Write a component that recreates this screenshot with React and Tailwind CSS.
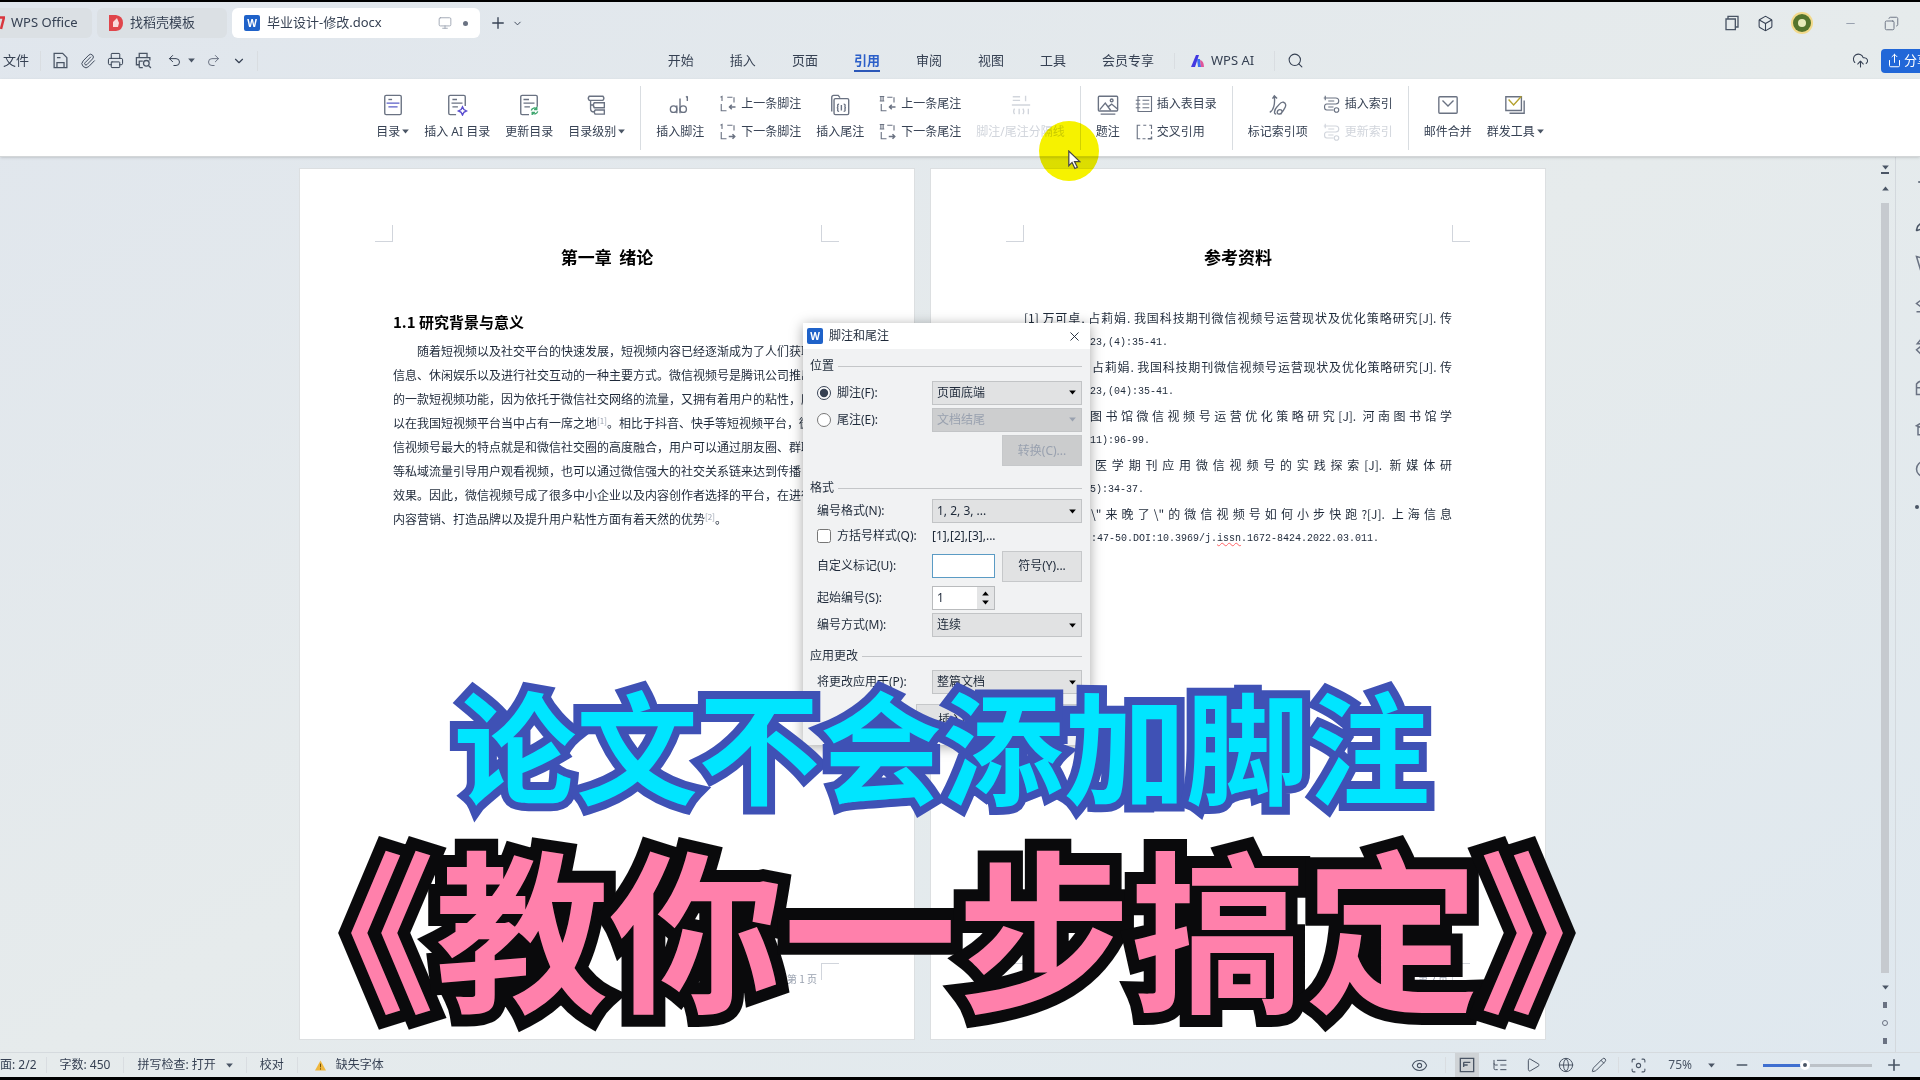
import {
  Box, ChevronDown, CloudUpload, Eye, Focus, Globe, ListTree, Minus, Monitor, Paperclip,
  Pencil, Play, Plus, Printer, Redo2, Search, Share, Undo2, X, Copy,
} from 'lucide-react';

const TABS = ['开始', '插入', '页面', '引用', '审阅', '视图', '工具', '会员专享'];

const BODY = [
  '信息、休闲娱乐以及进行社交互动的一种主要方式。微信视频号是腾讯公司推出',
  '的一款短视频功能，因为依托于微信社交网络的流量，又拥有着用户的粘性，所',
  <>以在我国短视频平台当中占有一席之地<Cite n={1} />。相比于抖音、快手等短视频平台，微</>,
  '信视频号最大的特点就是和微信社交圈的高度融合，用户可以通过朋友圈、群聊',
  '等私域流量引导用户观看视频，也可以通过微信强大的社交关系链来达到传播',
  '效果。因此，微信视频号成了很多中小企业以及内容创作者选择的平台，在进行',
  <>内容营销、打造品牌以及提升用户粘性方面有着天然的优势<Cite n={2} />。</>,
];

const REFERENCES = [
  { pad: 'pl-0', text: '[1] 万可卓, 占莉娟. 我国科技期刊微信视频号运营现状及优化策略研究[J]. 传', tailPad: 'pl-[60px]', tail: '023,(4):35-41.' },
  { pad: 'pl-[68px]', text: '占莉娟. 我国科技期刊微信视频号运营现状及优化策略研究[J]. 传', tailPad: 'pl-[60px]', tail: '023,(04):35-41.' },
  { pad: 'pl-[66px]', text: '图书馆微信视频号运营优化策略研究[J]. 河南图书馆学', tailPad: 'pl-[60px]', tail: '(11):96-99.' },
  { pad: 'pl-[71px]', text: '医学期刊应用微信视频号的实践探索[J]. 新媒体研', tailPad: 'pl-[66px]', tail: '5):34-37.' },
  { pad: 'pl-[67px]', text: '\\"来晚了\\"的微信视频号如何小步快跑?[J]. 上海信息', tailPad: 'pl-[67px]', tail: null },
];

function Cite({ n }) {
  return <sup className="text-[8px] leading-none text-gray-400">[{n}]</sup>;
}

function Caret({ className = 'text-gray-600' }) {
  return (
    <svg viewBox="0 0 8 6" className={`h-[5px] w-[7px] shrink-0 ${className}`} fill="currentColor">
      <path d="M0 0.5h8L4 5.5z" />
    </svg>
  );
}

function Divider({ className = 'h-5' }) {
  return <span className={`w-px shrink-0 bg-[#d9dde1] ${className}`} />;
}

/* ---------- ribbon icons ---------- */

function Icon({ children, size = 'h-[22px] w-[22px]', className = 'text-gray-500' }) {
  return (
    <svg viewBox="0 0 24 24" className={`${size} shrink-0 ${className}`} fill="none" stroke="currentColor" strokeWidth="1.5">
      {children}
    </svg>
  );
}

const TocIcon = () => (
  <Icon>
    <rect x="3" y="1.5" width="18" height="21" rx="1.5" />
    <path d="M7 6h4" />
    <path d="M5 10h14M7 14h10" stroke="#5b5fc7" />
  </Icon>
);

const AiTocIcon = () => (
  <Icon>
    <path d="M11 22.500H4.500A1.500 1.500 0 0 1 3 21V3a1.500 1.500 0 0 1 1.500-1.500h15A1.500 1.500 0 0 1 21 3v10M7 6h5M6 10h12M7 14h6" />
    <path d="M18 14l1.500 3 3 1.500-3 1.500-1.500 3-1.500-3-3-1.500 3-1.500z" stroke="#5b4fd0" />
  </Icon>
);

const RefreshTocIcon = () => (
  <Icon>
    <path d="M12 22.500H4.500A1.500 1.500 0 0 1 3 21V3a1.500 1.500 0 0 1 1.500-1.500h15A1.500 1.500 0 0 1 21 3v11M6 6h6M6 10h12M7 14h6" />
    <path d="M14.500 18a3.500 3.500 0 0 1 6-1.500M21.500 19a3.500 3.500 0 0 1-6 1.500M20.500 14v3h-3M15.500 23v-3h3" stroke="#3fa66f" />
  </Icon>
);

const LevelIcon = () => (
  <Icon>
    <path d="M3.500 2.500h15q2 2.200 0 4.500h-15q-2-2.300 0-4.500zM9 9.500h11V15H9q-2-2.700 0-5.500zM10 17.500h10V22H10q-2-2.200 0-4.500zM5 7v9q0 3.500 4 3.500M5 12h3" />
  </Icon>
);

const FootnoteIcon = () => (
  <Icon>
    <circle cx="5" cy="16.500" r="3.500" />
    <path d="M8.500 12.500V21M12 5v16M20 2.500v5M18.500 3.500L20 2.500" />
    <circle cx="15.500" cy="16.500" r="3.500" />
  </Icon>
);

const EndnoteIcon = () => (
  <Icon>
    <path d="M3 19V3.500A2 2 0 0 1 5 1.500h5l2 2.500" />
    <rect x="5.500" y="5" width="16" height="17.500" rx="1.500" />
    <path d="M11 11q-2 0-1.500 2t-1 2q1.500 0 1 2t1.500 2M16 11q2 0 1.500 2t1 2q-1.500 0-1 2t-1.500 2M13.500 12v6" />
  </Icon>
);

const StepIcon = ({ next, roman }) => (
  <Icon size="h-[18px] w-[18px]">
    <path d={roman ? 'M1 2h6M2.500 2v6M5.500 2v6M1 8h6' : 'M2 3l2-1v6'} />
    <path d="M3 12v9h7" />
    <path d="M11 3h9v8" strokeDasharray="7 2" />
    {next ? <path d="M13 18h8M18 15l3 3-3 3" strokeWidth="2" /> : <path d="M22 16h-8M17 13l-3 3 3 3" strokeWidth="2" />}
  </Icon>
);

const SeparatorIcon = () => (
  <Icon className="text-gray-300">
    <path d="M3 3h8M3 7h8M17 2v6M2 12h20M5 16q-2 3 0 6M10 16v6M14 16q2 3 0 6M20 16v6" />
  </Icon>
);

const CaptionIcon = () => (
  <Icon>
    <rect x="1.500" y="2.500" width="21" height="16" rx="1" />
    <path d="M3 17l6-7 6 8M12 14l4-3 6 5M4 22h16" />
    <circle cx="16" cy="7" r="1.500" />
  </Icon>
);

const TableListIcon = () => (
  <Icon size="h-[18px] w-[18px]">
    <path d="M4 2h18v20H4zM1 7h6M1 12h6M1 17h6M10 7h9M10 12h9M10 17h9" />
  </Icon>
);

const CrossRefIcon = () => (
  <Icon size="h-[18px] w-[18px]">
    <path d="M7 3H3v18h4M11 3h4M19 3h3v5M22 11v4M10 21h4" />
    <path d="M17 21h5v-3" strokeWidth="2" />
  </Icon>
);

const MarkIcon = () => (
  <Icon>
    <path d="M3 20c4-2 6-9 5-17M6 5l2-3 3 3M10 22c-3 0-2-5 1-8s4-6 7-5 3 4 1 7-3 6-6 6-2-5 1-5 3 3 1 5" />
  </Icon>
);

const IndexIcon = ({ className }) => (
  <Icon size="h-[18px] w-[18px]" className={className}>
    <path d="M1 4h16q4 0 4 4t-4 4H5q-3 0-3 4t3 4h9M3 1v6M7 8h8M7 16h7" />
    <circle cx="18" cy="20" r="3" />
  </Icon>
);

const MailIcon = () => (
  <Icon>
    <rect x="2" y="3" width="20" height="18" rx="1" />
    <path d="M6 7l6 6 6-6" />
  </Icon>
);

const BulkMailIcon = () => (
  <Icon>
    <path d="M2 3h17v15H2zM22 7v14H6" />
    <path d="M5 6l5.500 6L19 2.500" stroke="#b5a12e" />
  </Icon>
);

/* ---------- ribbon ---------- */

function BigTool({ icon, label, caret, disabled }) {
  return (
    <button type="button" disabled={disabled} className="flex flex-col items-center gap-1.5 text-gray-700 disabled:text-gray-300">
      {icon}
      <span className="flex items-center gap-0.5 leading-5">
        {label}
        {caret && <Caret />}
      </span>
    </button>
  );
}

function SmallTool({ icon, label, disabled }) {
  return (
    <button type="button" disabled={disabled} className="flex h-6 items-center gap-1 text-gray-700 disabled:text-gray-300">
      {icon}
      {label}
    </button>
  );
}

function ToolStack({ children }) {
  return <div className="flex flex-col gap-1">{children}</div>;
}

function Ribbon() {
  return (
    <div className="z-10 flex h-[78px] shrink-0 items-center justify-center gap-[15px] border-b border-[#d3d6d8] bg-white text-xs whitespace-nowrap shadow-sm">
      <BigTool icon={<TocIcon />} label="目录" caret />
      <BigTool icon={<AiTocIcon />} label="插入 AI 目录" />
      <BigTool icon={<RefreshTocIcon />} label="更新目录" />
      <BigTool icon={<LevelIcon />} label="目录级别" caret />
      <Divider className="h-16" />
      <BigTool icon={<FootnoteIcon />} label="插入脚注" />
      <ToolStack>
        <SmallTool icon={<StepIcon />} label="上一条脚注" />
        <SmallTool icon={<StepIcon next />} label="下一条脚注" />
      </ToolStack>
      <BigTool icon={<EndnoteIcon />} label="插入尾注" />
      <ToolStack>
        <SmallTool icon={<StepIcon roman />} label="上一条尾注" />
        <SmallTool icon={<StepIcon roman next />} label="下一条尾注" />
      </ToolStack>
      <BigTool icon={<SeparatorIcon />} label="脚注/尾注分隔线" disabled />
      <Divider className="h-16" />
      <BigTool icon={<CaptionIcon />} label="题注" />
      <ToolStack>
        <SmallTool icon={<TableListIcon />} label="插入表目录" />
        <SmallTool icon={<CrossRefIcon />} label="交叉引用" />
      </ToolStack>
      <Divider className="h-16" />
      <BigTool icon={<MarkIcon />} label="标记索引项" />
      <ToolStack>
        <SmallTool icon={<IndexIcon />} label="插入索引" />
        <SmallTool icon={<IndexIcon className="text-gray-300" />} label="更新索引" disabled />
      </ToolStack>
      <Divider className="h-16" />
      <BigTool icon={<MailIcon />} label="邮件合并" />
      <BigTool icon={<BulkMailIcon />} label="群发工具" caret />
    </div>
  );
}

/* ---------- window chrome ---------- */

function WordBadge() {
  return (
    <span className="flex h-4 w-4 shrink-0 items-center justify-center rounded-[2px] bg-[#1f62c9] text-[10px] leading-none font-bold text-white">
      W
    </span>
  );
}

function TitleBar() {
  return (
    <div className="flex h-[42px] shrink-0 items-center justify-between text-[13px] text-gray-700">
      <div className="flex items-center gap-[5px]">
        <div className="flex h-[30px] w-[92px] items-center gap-1.5 rounded-r-md bg-[#dbe0e4]">
          <svg viewBox="0 0 5 14" className="h-3.5 w-[5px] shrink-0" fill="none" stroke="#d9363e" strokeWidth="2.5">
            <path d="M0 1.500h4L1 13" />
          </svg>
          <span className="text-[13px]">WPS Office</span>
        </div>
        <div className="flex h-[30px] w-[130px] items-center gap-[7px] rounded-md bg-[#dbe0e4] pl-3">
          <svg viewBox="0 0 14 16" className="h-4 w-3.5 shrink-0">
            <path d="M0 0h7q7 1 7 8t-7 8H0z" fill="#e0454b" />
            <path d="M4 12V7l4-4 2 5-1 4z" fill="#fff" opacity=".8" />
          </svg>
          <span>找稻壳模板</span>
        </div>
        <div className="flex h-[30px] w-[248px] items-center gap-[7px] rounded-md bg-white pr-3 pl-3">
          <WordBadge />
          <span className="flex-1 whitespace-nowrap">毕业设计-修改.docx</span>
          <Monitor size={14} strokeWidth={1.5} className="text-gray-400" />
          <span className="ml-1 h-[5px] w-[5px] rounded-full bg-gray-500" />
        </div>
        <button type="button" aria-label="新建" className="ml-1"><Plus size={18} strokeWidth={1.8} /></button>
        <button type="button" aria-label="更多标签"><ChevronDown size={11} /></button>
      </div>
      <div className="flex items-center gap-[17px] pr-[21px]">
        <button type="button" aria-label="窗口">
          <Icon size="h-4 w-4" className="text-gray-600"><path d="M3 6h14v16H3zM6 6V2h15v16h-4" strokeWidth="2" /></Icon>
        </button>
        <button type="button" aria-label="应用"><Box size={17} strokeWidth={1.5} /></button>
        <span className="flex h-[22px] w-[22px] items-center justify-center rounded-full bg-[#f2d98a]">
          <span className="flex h-[18px] w-[18px] items-center justify-center rounded-full bg-[#54742c]">
            <span className="h-2 w-2 rounded-full bg-[#e8eab8]" />
          </span>
        </span>
        <button type="button" aria-label="最小化" className="ml-3.5 text-gray-400"><Minus size={13} /></button>
        <button type="button" aria-label="还原" className="ml-2.5 text-gray-500"><Copy size={15} strokeWidth={1.5} className="-scale-x-100" /></button>
      </div>
    </div>
  );
}

function MenuBar() {
  return (
    <div className="grid h-[35px] shrink-0 grid-cols-[1fr_auto_1fr] items-center pb-0.5 text-[13px] text-gray-700">
      <div className="flex items-center gap-[11px] pl-[3px]">
        <button type="button">文件</button>
        <Divider />
        <button type="button" aria-label="保存">
          <Icon size="h-[17px] w-[17px]" className="text-gray-600"><path d="M3 2h12l6 6v14H3zM7 22v-7h10v7M7 8h5" strokeWidth="1.8" /></Icon>
        </button>
        <button type="button" aria-label="附件"><Paperclip size={16} strokeWidth={1.4} /></button>
        <button type="button" aria-label="打印"><Printer size={17} strokeWidth={1.4} /></button>
        <button type="button" aria-label="打印预览">
          <Icon size="h-[17px] w-[17px]" className="text-gray-600">
            <path d="M6 8V2h11v6M6 18H2V8h19v4M6 22V13h5M6 22h5" strokeWidth="1.8" />
            <circle cx="16" cy="16" r="4" strokeWidth="1.8" />
            <path d="M19 19l3.500 3.500" strokeWidth="1.800" />
          </Icon>
        </button>
        <button type="button" aria-label="撤销" className="flex items-center gap-1.5 pl-1"><Undo2 size={15} strokeWidth={1.6} /><Caret /></button>
        <button type="button" aria-label="恢复" className="text-gray-500"><Redo2 size={15} strokeWidth={1.6} /></button>
        <button type="button" aria-label="更多"><ChevronDown size={14} /></button>
        <Divider />
      </div>
      <nav className="ml-13 flex items-center gap-9 whitespace-nowrap">
        {TABS.map((tab) => (
          <button
            key={tab}
            type="button"
            className={tab === '引用' ? 'border-b-2 border-[#2b57b8] pt-0.5 font-bold text-[#2b5fc9]' : ''}
          >
            {tab}
          </button>
        ))}
        <div className="-ml-4 flex items-center gap-4">
          <Divider className="h-4" />
          <button type="button" className="flex items-center gap-1.5">
            <svg viewBox="0 0 14 14" className="h-3.5 w-3.5">
              <path d="M0 13L5 1h3L4 13z" fill="#4338e0" />
              <path d="M6 5h3l1 8H7z" fill="#3b6ff0" />
              <path d="M9 6q4 1 4 7h-3z" fill="#e0559a" />
            </svg>
            WPS AI
          </button>
          <Divider className="ml-1 h-5" />
          <button type="button" aria-label="搜索" className="-ml-1"><Search size={17} strokeWidth={1.5} /></button>
        </div>
      </nav>
      <div className="flex items-center justify-end gap-3">
        <button type="button" aria-label="云同步"><CloudUpload size={17} strokeWidth={1.5} /></button>
        <button type="button" className="flex h-6 w-[39px] items-center gap-0.5 overflow-hidden rounded-l bg-[#2167d8] pl-1.5 whitespace-nowrap text-white">
          <Share size={15} strokeWidth={1.6} className="shrink-0" />
          分享
        </button>
      </div>
    </div>
  );
}

/* ---------- document ---------- */

function Page({ footer, children }) {
  return (
    <article className="flex w-[616px] flex-col border border-[#dcdfe1] bg-white pt-14 pb-[52px] font-['Noto_Sans_CJK_SC',sans-serif] text-xs text-gray-800">
      <div className="flex h-[17px] justify-between px-[75px]">
        <span className="w-[18px] border-r border-b border-gray-300" />
        <span className="w-[18px] border-b border-l border-gray-300" />
      </div>
      <div className="px-[93px] leading-6 whitespace-nowrap">{children}</div>
      <div className="mt-auto flex h-6 items-start px-[75px]">
        <span className="h-[17px] w-[18px] border-t border-r border-gray-300" />
        <span className="flex-1 pt-2 pr-1 text-right text-[10px] leading-4 text-gray-400">{footer}</span>
        <span className="h-[17px] w-[18px] border-t border-l border-gray-300" />
      </div>
    </article>
  );
}

function Pages() {
  return (
    <div className="flex flex-1 justify-center gap-[15px] pt-[11px] pr-9 pb-3">
      <Page footer="第 1 页">
        <h1 className="mt-[3px] text-center text-[17px] leading-6 font-bold text-black">第一章&nbsp; 绪论</h1>
        <h2 className="mt-[41px] text-[15px] leading-6 font-bold text-black">1.1 研究背景与意义</h2>
        <div className="mt-[5px]">
          <p className="pl-6">随着短视频以及社交平台的快速发展，短视频内容已经逐渐成为了人们获取</p>
          {BODY.map((line, i) => <p key={i}>{line}</p>)}
        </div>
      </Page>
      <Page footer="第 2 页">
        <h1 className="mt-[3px] text-center text-[17px] leading-6 font-bold text-black">参考资料</h1>
        <div className="mt-[37px]">
          {REFERENCES.map((ref, i) => (
            <div key={i}>
              <p className={`[text-align-last:justify] ${ref.pad}`}>{ref.text}</p>
              <p className={`pt-px font-['Liberation_Mono',monospace] text-[10px] leading-6 ${ref.tailPad}`}>
                {ref.tail ?? (
                  <>
                    :47-50.DOI:10.3969/j.
                    <span className="underline decoration-red-400 decoration-wavy">issn</span>
                    .1672-8424.2022.03.011.
                  </>
                )}
              </p>
            </div>
          ))}
        </div>
      </Page>
    </div>
  );
}

function ScrollTrack() {
  return (
    <div className="flex w-[14px] flex-col items-center gap-3 pt-2 pr-1.5 pb-2 text-gray-600">
      <span className="flex w-2 flex-col items-center gap-0.5 border-b-2 border-gray-600 pb-0.5"><Caret /></span>
      <Caret className="rotate-180 text-gray-600" />
      <span className="w-2 flex-1 bg-[#c6cacf]" />
      <Caret />
      <span className="h-1.5 w-1 bg-gray-500" />
      <span className="h-1.5 w-1.5 rounded-full border border-gray-500" />
      <span className="h-1.5 w-1 bg-gray-500" />
    </div>
  );
}

function SideRail() {
  return (
    <aside className="flex w-[25px] flex-col gap-[23px] overflow-hidden border-l border-[#d3d8dd] pt-4 pl-[19px] text-gray-600">
      <Minus size={18} className="shrink-0" />
      <Pencil size={18} className="shrink-0" />
      <Icon size="h-[18px] w-[18px]"><path d="M2 2l20 6-10 4-4 10z" strokeWidth="2" /></Icon>
      <Icon size="h-[18px] w-[18px]"><path d="M10 4L2 10l8 6M2 21h20" strokeWidth="2" /></Icon>
      <Icon size="h-[18px] w-[18px]"><path d="M8 3L3 9h8M2 17l5-4 5 4-5 5z" strokeWidth="2" /></Icon>
      <Icon size="h-[18px] w-[18px]"><path d="M2 8q6-8 18 0v14H2zM2 13h18" strokeWidth="2" /></Icon>
      <Icon size="h-[18px] w-[18px]"><path d="M12 3L2 9l10 4M4 10v11h14" strokeWidth="2" /></Icon>
      <Icon size="h-[18px] w-[18px]"><circle cx="12" cy="12" r="10" strokeWidth="2" /></Icon>
      <span className="mt-1 h-1 w-1 rounded-full bg-gray-600" />
    </aside>
  );
}

/* ---------- footnote dialog ---------- */

function Section({ title }) {
  return (
    <div className="flex h-5 items-center gap-1 pr-2 pl-[7px]">
      <span>{title}</span>
      <span className="h-px flex-1 bg-[#c4c6c8]" />
    </div>
  );
}

function Select({ id, label, value, disabled }) {
  return (
    <span className="relative flex w-[150px] items-center">
      <select
        id={id}
        aria-label={label}
        disabled={disabled}
        className="h-6 w-full appearance-none border border-[#c2c4c6] bg-[#e1e2e3] pl-1 text-gray-800 disabled:bg-[#cdcecf] disabled:text-gray-400"
      >
        <option>{value}</option>
      </select>
      <Caret className={disabled ? 'absolute right-1.5 text-gray-400' : 'absolute right-1.5 text-black'} />
    </span>
  );
}

function DialogButton({ children, disabled }) {
  return (
    <button
      type="button"
      disabled={disabled}
      className="h-[31px] w-20 border border-[#c6c8ca] bg-[#e1e2e3] text-gray-800 disabled:bg-[#cbcccd] disabled:text-gray-400"
    >
      {children}
    </button>
  );
}

function Row({ className = 'h-[26px]', children }) {
  return <div className={`grid grid-cols-[115px_150px] items-center pl-[14px] ${className}`}>{children}</div>;
}

function FootnoteDialog() {
  return (
    <section className="absolute top-[321px] left-[803px] z-20 flex h-[422px] w-[287px] flex-col bg-[#f1f2f3] text-xs whitespace-nowrap text-gray-800 shadow-[0_2px_12px_rgba(0,0,0,0.35)]">
      <header className="flex h-[26px] items-center gap-1.5 bg-white pr-2 pl-1">
        <WordBadge />
        <h2 className="flex-1">脚注和尾注</h2>
        <button type="button" aria-label="关闭"><X size={15} strokeWidth={1.5} /></button>
      </header>
      <form className="flex flex-1 flex-col pt-[7px]">
        <Section title="位置" />
        <Row className="mt-[3px] h-[27px]">
          <label className="flex items-center gap-1.5">
            <input type="radio" name="position" defaultChecked className="h-[14px] w-[14px] accent-gray-700" />
            脚注(F):
          </label>
          <Select label="脚注位置" value="页面底端" />
        </Row>
        <Row className="h-[27px]">
          <label className="flex items-center gap-1.5">
            <input type="radio" name="position" className="h-[14px] w-[14px] accent-gray-700" />
            尾注(E):
          </label>
          <Select label="尾注位置" value="文档结尾" disabled />
        </Row>
        <div className="mt-0.5 flex justify-end pr-2">
          <DialogButton disabled>转换(C)...</DialogButton>
        </div>
        <div className="mt-3"><Section title="格式" /></div>
        <Row className="mt-px">
          <label htmlFor="number-format">编号格式(N):</label>
          <Select id="number-format" value="1, 2, 3, ..." />
        </Row>
        <Row>
          <label className="flex items-center gap-1.5">
            <input type="checkbox" className="h-[14px] w-[14px]" />
            方括号样式(Q):
          </label>
          <span>[1],[2],[3],...</span>
        </Row>
        <Row className="h-[34px]">
          <label htmlFor="custom-mark">自定义标记(U):</label>
          <span className="flex items-center justify-between">
            <input id="custom-mark" type="text" className="h-6 w-[63px] border border-[#5b9bc4] bg-white px-1" />
            <DialogButton>符号(Y)...</DialogButton>
          </span>
        </Row>
        <Row className="h-[29px]">
          <label htmlFor="start-at">起始编号(S):</label>
          <span className="flex h-6 w-[63px] border border-[#b9bbbd] bg-white">
            <input id="start-at" type="text" defaultValue="1" className="min-w-0 flex-1 pl-1" />
            <span className="flex w-[17px] flex-col items-center justify-evenly bg-[#e4e5e6]">
              <button type="button" aria-label="增加"><Caret className="rotate-180 text-black" /></button>
              <button type="button" aria-label="减少"><Caret className="text-black" /></button>
            </span>
          </span>
        </Row>
        <Row>
          <label htmlFor="numbering">编号方式(M):</label>
          <Select id="numbering" value="连续" />
        </Row>
        <div className="mt-2"><Section title="应用更改" /></div>
        <Row className="mt-1">
          <label htmlFor="apply-to">将更改应用于(P):</label>
          <Select id="apply-to" value="整篇文档" />
        </Row>
        <div className="mt-2.5 flex justify-end gap-1.5 pr-2">
          <DialogButton>插入(I)</DialogButton>
          <DialogButton>取消</DialogButton>
        </div>
      </form>
    </section>
  );
}

/* ---------- status bar ---------- */

function StatusBar() {
  return (
    <footer className="flex h-[25px] shrink-0 items-center justify-between border-t border-[#d5dade] text-xs whitespace-nowrap text-gray-700">
      <div className="flex items-center gap-[13px]">
        <span className="-mr-1">面: 2/2</span>
        <Divider className="h-4" />
        <span>字数: 450</span>
        <Divider className="h-4" />
        <button type="button" className="flex items-center gap-2.5">拼写检查: 打开<Caret /></button>
        <Divider className="h-4" />
        <button type="button">校对</button>
        <Divider className="h-4" />
        <button type="button" className="flex items-center gap-2.5 pl-1">
          <svg viewBox="0 0 12 12" className="h-[11px] w-[11px]">
            <path d="M6 0.500L12 11.500H0z" fill="#efb73e" />
            <path d="M6 4v4M6 9v1.500" stroke="#6b4a00" />
          </svg>
          缺失字体
        </button>
      </div>
      <div className="flex items-center gap-[17px] pr-[17px] text-gray-600">
        <Eye size={17} strokeWidth={1.5} />
        <Divider className="-mr-2 h-4" />
        <span className="-mr-1 flex h-6 w-6 items-center justify-center bg-[#cfd3d6]">
          <Icon size="h-4 w-4" className="text-gray-600"><path d="M2 2h20v20H2zM7 8h10M7 12h6M7 8v7" strokeWidth="2" /></Icon>
        </span>
        <ListTree size={16} strokeWidth={1.5} />
        <Play size={16} strokeWidth={1.5} />
        <Globe size={16} strokeWidth={1.5} />
        <Pencil size={16} strokeWidth={1.5} />
        <Divider className="-mr-1.5 -ml-1.5 h-4" />
        <Focus size={17} strokeWidth={1.5} />
        <button type="button" className="ml-1 flex items-center gap-4">75%<Caret /></button>
        <button type="button" aria-label="缩小" className="-mr-1 ml-0.5"><Minus size={16} strokeWidth={2.5} /></button>
        <input
          type="range"
          aria-label="缩放"
          defaultValue={37}
          className="h-[3px] w-[109px] appearance-none bg-linear-to-r from-[#3f6fd0] from-37% to-[#bcc2c8] to-37% [&::-webkit-slider-thumb]:h-2.5 [&::-webkit-slider-thumb]:w-2.5 [&::-webkit-slider-thumb]:appearance-none [&::-webkit-slider-thumb]:rounded-full [&::-webkit-slider-thumb]:border-[3px] [&::-webkit-slider-thumb]:border-white [&::-webkit-slider-thumb]:bg-gray-600"
        />
        <button type="button" aria-label="放大" className="-ml-1"><Plus size={18} strokeWidth={2.2} /></button>
      </div>
    </footer>
  );
}

/* ---------- overlays ---------- */

function Pointer() {
  return (
    <>
      <div className="pointer-events-none absolute top-[119px] left-[1039px] z-20 h-[60px] w-[60px] rounded-full bg-[#f6f200] mix-blend-multiply" />
      <svg viewBox="0 0 16 24" className="pointer-events-none absolute top-[148px] left-[1068px] z-30 h-5 w-[13px]">
        <path d="M1 1v18l4-4 3.500 7.500 3-1.500L8 14h6.500z" fill="#fff" stroke="#444" strokeWidth="1.5" />
      </svg>
    </>
  );
}

function Caption() {
  return (
    <div className="pointer-events-none absolute inset-x-0 top-[672px] z-40 flex flex-col items-center font-['Noto_Sans_CJK_SC',sans-serif] font-bold whitespace-nowrap">
      <p className="pr-9 text-[122px] leading-[136px] text-[#00e5ff] [paint-order:stroke_fill] [-webkit-text-stroke:16px_#3f51b5]">
        论文不会添加脚注
      </p>
      <p className="pr-1.5 text-[174px] leading-[226px] text-[#ff80ab] [paint-order:stroke_fill] [-webkit-text-stroke:24px_#0a0a0c]">
        《教你一步搞定》
      </p>
    </div>
  );
}

export default function App() {
  return (
    <div className="relative flex h-screen flex-col overflow-hidden border-t-2 border-b-3 border-black bg-linear-to-br from-[#e0e6ed] via-[#e6ebec] to-[#dfe8ef] font-['Noto_Sans','Noto_Sans_CJK_SC',sans-serif]">
      <TitleBar />
      <MenuBar />
      <Ribbon />
      <main className="flex min-h-0 flex-1">
        <Pages />
        <ScrollTrack />
        <SideRail />
      </main>
      <StatusBar />
      <FootnoteDialog />
      <Pointer />
      <Caption />
    </div>
  );
}
